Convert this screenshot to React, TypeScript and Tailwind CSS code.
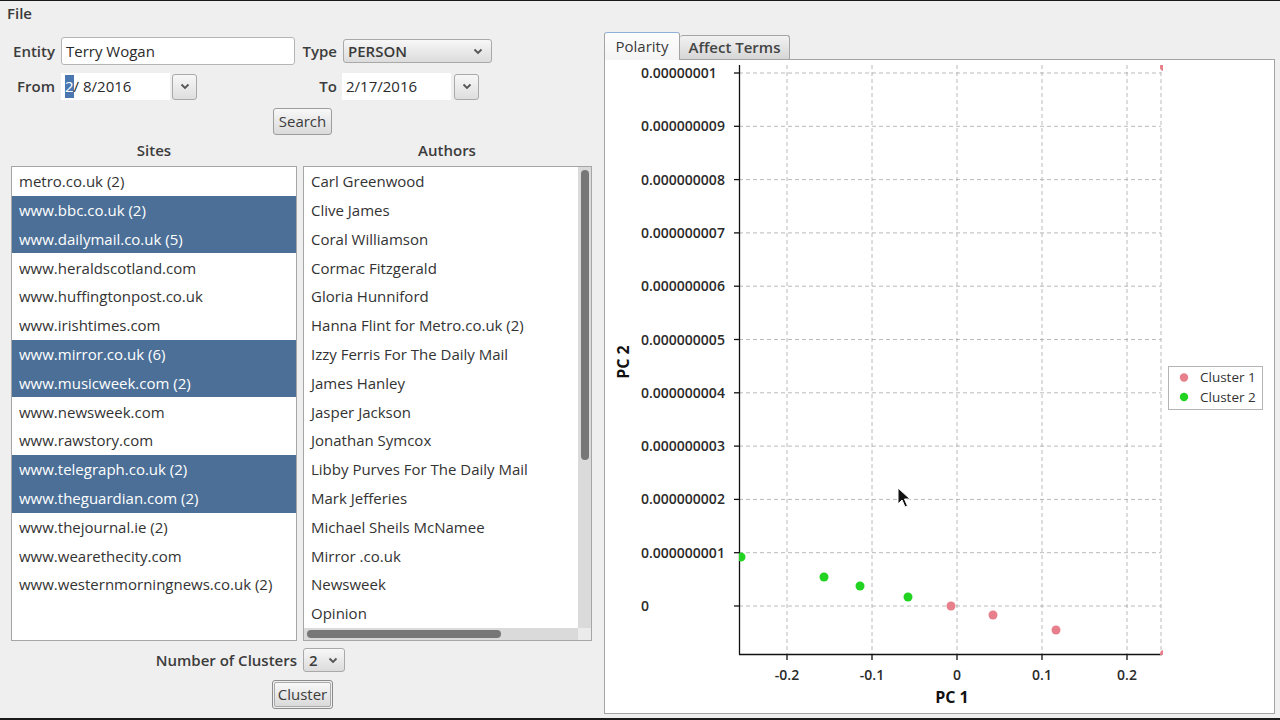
import React from 'react';

const sites: { name: string; sel?: boolean }[] = [
  { name: 'metro.co.uk (2)' },
  { name: 'www.bbc.co.uk (2)', sel: true },
  { name: 'www.dailymail.co.uk (5)', sel: true },
  { name: 'www.heraldscotland.com' },
  { name: 'www.huffingtonpost.co.uk' },
  { name: 'www.irishtimes.com' },
  { name: 'www.mirror.co.uk (6)', sel: true },
  { name: 'www.musicweek.com (2)', sel: true },
  { name: 'www.newsweek.com' },
  { name: 'www.rawstory.com' },
  { name: 'www.telegraph.co.uk (2)', sel: true },
  { name: 'www.theguardian.com (2)', sel: true },
  { name: 'www.thejournal.ie (2)' },
  { name: 'www.wearethecity.com' },
  { name: 'www.westernmorningnews.co.uk (2)' },
];

const authors = [
  'Carl Greenwood',
  'Clive James',
  'Coral Williamson',
  'Cormac Fitzgerald',
  'Gloria Hunniford',
  'Hanna Flint for Metro.co.uk (2)',
  'Izzy Ferris For The Daily Mail',
  'James Hanley',
  'Jasper Jackson',
  'Jonathan Symcox',
  'Libby Purves For The Daily Mail',
  'Mark Jefferies',
  'Michael Sheils McNamee',
  'Mirror .co.uk',
  'Newsweek',
  'Opinion',
];

function Chevron() {
  return (
    <svg width="10" height="7" viewBox="0 0 10 7" className="shrink-0">
      <path d="M1.5 1.5 L5 5 L8.5 1.5" fill="none" stroke="#555" strokeWidth="1.8" />
    </svg>
  );
}

function DropButton() {
  return (
    <div className="w-[25px] h-[26px] flex items-center justify-center rounded-[3px] border border-[#a9a9a9] bg-gradient-to-b from-[#f7f7f7] to-[#dedede]">
      <Chevron />
    </div>
  );
}

function Chart() {
  const yLabels = [
    '0.00000001',
    '0.000000009',
    '0.000000008',
    '0.000000007',
    '0.000000006',
    '0.000000005',
    '0.000000004',
    '0.000000003',
    '0.000000002',
    '0.000000001',
    '0',
  ];
  const yPos = (i: number) => 72 + i * 53.3;
  const xTicks = [
    { x: 786, l: '-0.2' },
    { x: 871, l: '-0.1' },
    { x: 956, l: '0' },
    { x: 1041, l: '0.1' },
    { x: 1126, l: '0.2' },
  ];
  const green = [
    [740, 556],
    [823, 576],
    [859, 585],
    [907, 596],
  ];
  const pink = [
    [950, 605],
    [992, 614],
    [1055, 629],
  ];
  return (
    <svg width="671" height="655" viewBox="604 59 671 655" className="block">
      <defs>
        <clipPath id="plot">
          <rect x="738" y="64" width="424" height="590" />
        </clipPath>
      </defs>
      {yLabels.map((_, i) => (
        <line key={'h' + i} x1="738" x2="1160" y1={yPos(i)} y2={yPos(i)} stroke="#a8a8a8" strokeWidth="0.8" strokeDasharray="4 3" />
      ))}
      {xTicks.map((t) => (
        <line key={'v' + t.x} x1={t.x} x2={t.x} y1="64" y2="653" stroke="#a8a8a8" strokeWidth="0.8" strokeDasharray="4 3" />
      ))}
      <line x1="1160" x2="1160" y1="64" y2="653" stroke="#a8a8a8" strokeWidth="0.8" strokeDasharray="4 3" />
      <line x1="738.5" x2="738.5" y1="64" y2="653.5" stroke="#111" strokeWidth="1.3" />
      <line x1="738" x2="1161" y1="653.5" y2="653.5" stroke="#111" strokeWidth="1.3" />
      {yLabels.map((l, i) => (
        <g key={'yl' + i}>
          <line x1="733" x2="738" y1={yPos(i)} y2={yPos(i)} stroke="#111" strokeWidth="1.3" />
          <text x="640" y={yPos(i) + 5} fontSize="14" fontWeight="600" fill="#2a2a2a" fontFamily="'Open Sans', sans-serif">
            {l}
          </text>
        </g>
      ))}
      {xTicks.map((t) => (
        <g key={'xl' + t.x}>
          <line x1={t.x} x2={t.x} y1="653" y2="659" stroke="#111" strokeWidth="1.3" />
          <text x={t.x} y="679" textAnchor="middle" fontSize="14" fontWeight="600" fill="#2a2a2a" fontFamily="'Open Sans', sans-serif">
            {t.l}
          </text>
        </g>
      ))}
      <text x="951" y="702" textAnchor="middle" fontSize="16" fontWeight="700" fill="#111" fontFamily="'Open Sans', sans-serif">
        PC 1
      </text>
      <text x="628" y="361" textAnchor="middle" fontSize="16" fontWeight="700" fill="#111" fontFamily="'Open Sans', sans-serif" transform="rotate(-90 628 361)">
        PC 2
      </text>
      <g clipPath="url(#plot)">
        {green.map(([x, y]) => (
          <circle key={'g' + x} cx={x} cy={y} r="4.5" fill="#22d322" />
        ))}
        {pink.map(([x, y]) => (
          <circle key={'p' + x} cx={x} cy={y} r="4.5" fill="#e8808b" />
        ))}
        <circle cx="1163" cy="66" r="4" fill="#e8808b" />
        <circle cx="1163" cy="653" r="4" fill="#e8808b" />
      </g>
      <rect x="1167.5" y="365.5" width="94" height="43" fill="#fff" stroke="#b4b4b4" />
      <circle cx="1183" cy="376.5" r="4.2" fill="#e8808b" />
      <circle cx="1183" cy="396" r="4.2" fill="#22d322" />
      <text x="1199" y="381" fontSize="13.5" fill="#333" fontFamily="'Open Sans', sans-serif">Cluster 1</text>
      <text x="1199" y="400.5" fontSize="13.5" fill="#333" fontFamily="'Open Sans', sans-serif">Cluster 2</text>
      <path d="M897 487 L897 503 L901 499 L904 506 L906.5 505 L903.5 498 L909 498 Z" fill="#111" stroke="#fff" strokeWidth="1" />
    </svg>
  );
}

export default function App() {
  return (
    <div
      className="w-[1280px] h-[720px] bg-[#efefef] text-[15px] text-[#3c3c3c] border-t border-b-2 border-[#1a1a1a] overflow-hidden relative flex flex-col"
      style={{ fontFamily: "'Open Sans', 'DejaVu Sans', sans-serif" }}
    >
      <div className="h-[25px] flex items-center px-[7px] shrink-0">
        <span className="font-semibold text-[#3a3a3a]">File</span>
      </div>

      <div className="flex flex-1">
        {/* left panel */}
        <div className="w-[604px] shrink-0 flex flex-col">
          <div className="flex items-center mt-[11px] h-[28px]">
            <div className="w-[55px] text-right font-semibold">Entity</div>
            <div className="ml-[6px] w-[234px] h-[28px] bg-white border border-[#b5b5b5] rounded-[3px] flex items-center px-[4px] text-[#2a2a2a]">
              Terry Wogan
            </div>
            <div className="w-[42px] text-right font-semibold">Type</div>
            <div className="ml-[6px] w-[149px] h-[24px] rounded-[3px] border border-[#a9a9a9] bg-gradient-to-b from-[#f7f7f7] to-[#dcdcdc] flex items-center justify-between pl-[4px] pr-[8px] font-semibold text-[#3a3a3a]">
              <span>PERSON</span>
              <Chevron />
            </div>
          </div>

          <div className="flex items-center mt-[8px] h-[27px]">
            <div className="w-[55px] text-right font-semibold">From</div>
            <div className="ml-[6px] w-[109px] h-[27px] bg-white flex items-center px-[4px] text-[#2a2a2a]">
              <span className="bg-[#4a77b0] text-white">2</span>/ 8/2016
            </div>
            <div className="ml-[2px]">
              <DropButton />
            </div>
            <div className="w-[140px] text-right font-semibold">To</div>
            <div className="ml-[5px] w-[109px] h-[27px] bg-white flex items-center px-[4px] text-[#2a2a2a]">2/17/2016</div>
            <div className="ml-[3px]">
              <DropButton />
            </div>
          </div>

          <div className="flex justify-center mt-[8px] pl-[1px]">
            <div className="w-[59px] h-[27px] flex items-center justify-center rounded-[3px] border border-[#9d9d9d] bg-gradient-to-b from-[#f8f8f8] to-[#dadada] text-[#3c3c3c]">
              Search
            </div>
          </div>

          <div className="flex h-[31px] items-center">
            <div className="ml-[11px] w-[286px] text-center font-semibold">Sites</div>
            <div className="ml-[6px] w-[288px] text-center font-semibold">Authors</div>
          </div>

          <div className="flex h-[475px]">
            <div className="ml-[11px] w-[286px] bg-white border border-[#a6a6a6] overflow-hidden">
              {sites.map((s) => (
                <div
                  key={s.name}
                  className={`h-[28.8px] flex items-center px-[7px] whitespace-nowrap ${s.sel ? 'bg-[#4b6f97] text-white' : 'text-[#333]'}`}
                >
                  {s.name}
                </div>
              ))}
            </div>
            <div className="ml-[6px] w-[289px] bg-white border border-[#a6a6a6] relative overflow-hidden flex">
              <div className="flex-1 flex flex-col overflow-hidden">
                <div className="flex-1 overflow-hidden">
                  {authors.map((a) => (
                    <div key={a} className="h-[28.8px] flex items-center px-[7px] whitespace-nowrap text-[#333]">
                      {a}
                    </div>
                  ))}
                </div>
                <div className="h-[12px] bg-[#dadada] shrink-0 flex items-center px-[3px]">
                  <div className="w-[194px] h-[8px] rounded-full bg-[#777]" />
                </div>
              </div>
              <div className="w-[13px] bg-[#dadada] flex flex-col items-center pt-[3px] shrink-0">
                <div className="w-[8px] h-[290px] rounded-full bg-[#777]" />
                <div className="flex-1" />
                <div className="h-[12px] w-[13px] bg-[#ebebeb]" />
              </div>
            </div>
          </div>

          <div className="flex items-center mt-[7px] h-[24px]">
            <div className="w-[297px] text-right font-semibold">Number of Clusters</div>
            <div className="ml-[6px] w-[42px] h-[24px] rounded-[3px] border border-[#a9a9a9] bg-gradient-to-b from-[#f7f7f7] to-[#dcdcdc] flex items-center justify-between pl-[5px] pr-[6px] font-semibold">
              <span>2</span>
              <Chevron />
            </div>
          </div>

          <div className="flex justify-center mt-[8px] pl-[1px]">
            <div className="p-[1px] border border-[#8c8c8c] rounded-[3px]">
              <div className="w-[57px] h-[25px] flex items-center justify-center rounded-[2px] border border-[#aaa] bg-gradient-to-b from-[#f8f8f8] to-[#dadada] text-[#3c3c3c]">
                Cluster
              </div>
            </div>
          </div>
        </div>

        {/* right panel */}
        <div className="flex flex-col w-[671px] mt-[5px]">
          <div className="flex items-end h-[28px]">
            <div className="w-[76px] h-[28px] bg-gradient-to-b from-[#fdfdfd] to-[#f4f4f4] border border-b-0 border-[#a4a4a4] border-t-[#8fb0d8] rounded-t-[3px] flex items-center justify-center text-[#3a3a3a] relative z-10 -mb-px">
              Polarity
            </div>
            <div className="w-[110px] h-[24px] bg-gradient-to-b from-[#f2f2f2] to-[#d6d6d6] border border-b-0 border-l-0 border-[#a4a4a4] rounded-t-[3px] flex items-center justify-center font-semibold text-[#444]">
              Affect Terms
            </div>
          </div>
          <div className="w-[671px] h-[655px] bg-white border border-[#a4a4a4] overflow-hidden">
            <Chart />
          </div>
        </div>
      </div>
    </div>
  );
}
